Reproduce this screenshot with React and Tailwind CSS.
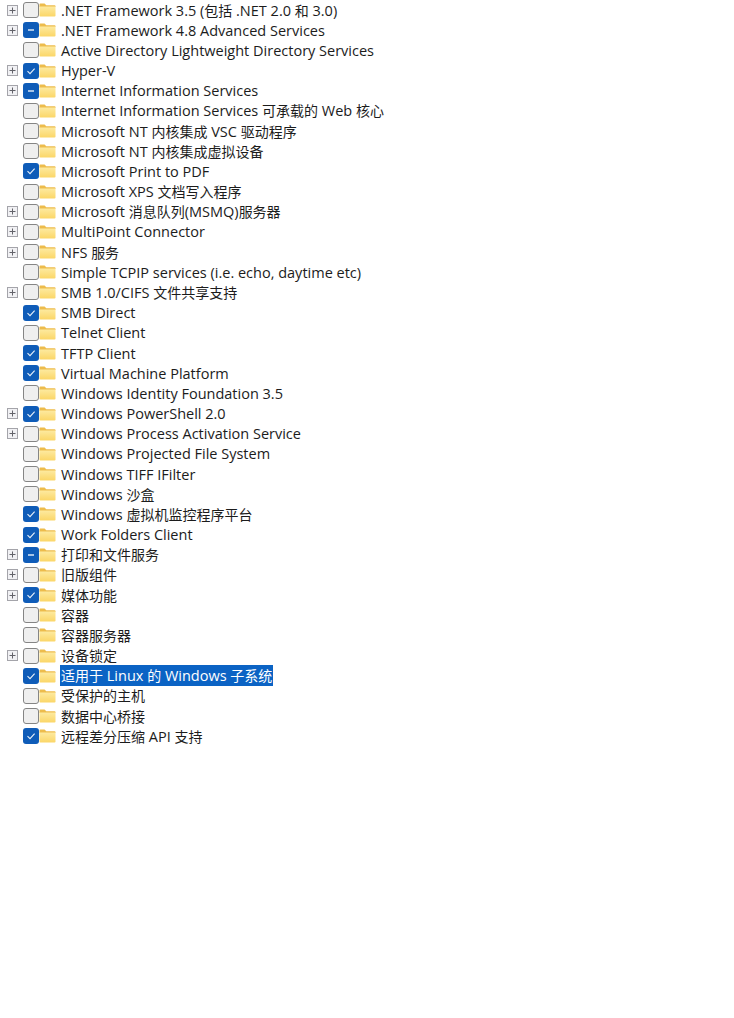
const FEATURES = [
  { label: '.NET Framework 3.5 (包括 .NET 2.0 和 3.0)', tree: true, state: 'off' },
  { label: '.NET Framework 4.8 Advanced Services', tree: true, state: 'mixed' },
  { label: 'Active Directory Lightweight Directory Services', state: 'off' },
  { label: 'Hyper-V', tree: true, state: 'on' },
  { label: 'Internet Information Services', tree: true, state: 'mixed' },
  { label: 'Internet Information Services 可承载的 Web 核心', state: 'off' },
  { label: 'Microsoft NT 内核集成 VSC 驱动程序', state: 'off' },
  { label: 'Microsoft NT 内核集成虚拟设备', state: 'off' },
  { label: 'Microsoft Print to PDF', state: 'on' },
  { label: 'Microsoft XPS 文档写入程序', state: 'off' },
  { label: 'Microsoft 消息队列(MSMQ)服务器', tree: true, state: 'off' },
  { label: 'MultiPoint Connector', tree: true, state: 'off' },
  { label: 'NFS 服务', tree: true, state: 'off' },
  { label: 'Simple TCPIP services (i.e. echo, daytime etc)', state: 'off' },
  { label: 'SMB 1.0/CIFS 文件共享支持', tree: true, state: 'off' },
  { label: 'SMB Direct', state: 'on' },
  { label: 'Telnet Client', state: 'off' },
  { label: 'TFTP Client', state: 'on' },
  { label: 'Virtual Machine Platform', state: 'on' },
  { label: 'Windows Identity Foundation 3.5', state: 'off' },
  { label: 'Windows PowerShell 2.0', tree: true, state: 'on' },
  { label: 'Windows Process Activation Service', tree: true, state: 'off' },
  { label: 'Windows Projected File System', state: 'off' },
  { label: 'Windows TIFF IFilter', state: 'off' },
  { label: 'Windows 沙盒', state: 'off' },
  { label: 'Windows 虚拟机监控程序平台', state: 'on' },
  { label: 'Work Folders Client', state: 'on' },
  { label: '打印和文件服务', tree: true, state: 'mixed' },
  { label: '旧版组件', tree: true, state: 'off' },
  { label: '媒体功能', tree: true, state: 'on' },
  { label: '容器', state: 'off' },
  { label: '容器服务器', state: 'off' },
  { label: '设备锁定', tree: true, state: 'off' },
  { label: '适用于 Linux 的 Windows 子系统', state: 'on', selected: true },
  { label: '受保护的主机', state: 'off' },
  { label: '数据中心桥接', state: 'off' },
  { label: '远程差分压缩 API 支持', state: 'on' },
];

function Expander() {
  return (
    <svg width="11" height="11" viewBox="0 0 11 11" className="shrink-0">
      <rect x="0.5" y="0.5" width="10" height="10" fill="#f1f1f4" stroke="#a4a4aa" />
      <path d="M2.5 5.5h6M5.5 2.5v6" stroke="#63636a" strokeWidth="1" />
    </svg>
  );
}

function Check({ state }) {
  if (state === 'off') {
    return <div className="w-[16px] h-[16px] rounded-[3px] border border-[#858585] bg-[#efefef] shrink-0" />;
  }
  return (
    <div className="w-[16px] h-[16px] rounded-[3px] bg-[#0f5cb8] flex items-center justify-center shrink-0">
      <svg width="10" height="10" viewBox="0 0 10 10" fill="none" stroke="#e8f1fb" strokeWidth="1.1">
        {state === 'on' ? <path d="M1.5 5.2 4 7.6 8.6 2.6" /> : <path d="M2 5h6" strokeWidth="1.4" />}
      </svg>
    </div>
  );
}

function Folder() {
  return (
    <svg width="17" height="14" viewBox="0 0 17 14" className="shrink-0">
      <defs>
        <linearGradient id="folderFill" x1="0" y1="0" x2="0" y2="1">
          <stop offset="0" stopColor="#fdeaa0" />
          <stop offset="1" stopColor="#fbd667" />
        </linearGradient>
      </defs>
      <path d="M0.5 1.5C0.5 .9 1 .5 1.6 .5H5.6l1.7 1.7H15.6c.6 0 .9.3.9.9V4H0.5z" fill="#edbc4c" />
      <path d="M0.5 3.4H16.5v9.4c0 .5-.3.8-.9.8H1.4c-.6 0-.9-.3-.9-.8z" fill="url(#folderFill)" />
    </svg>
  );
}

// CJK runs sit a touch smaller than the latin text
function Label({ text }) {
  const parts = text.split(/([\u4e00-\u9fff]+)/);
  return parts.map((part, i) => (
    <span key={i} className={i % 2 ? 'text-[14px]' : 'text-[14.5px]'}>{part}</span>
  ));
}

function FeatureRow({ label, tree, state, selected }) {
  return (
    <div className="flex items-center h-[20.18px]">
      <div className="w-[23px] pl-[7px] shrink-0">{tree && <Expander />}</div>
      <Check state={state} />
      <Folder />
      <span className={`ml-[4px] px-[1px] leading-[20px] whitespace-nowrap ${selected ? 'bg-[#0b63c4] text-white' : 'text-[#1c1c1c]'}`}>
        <Label text={label} />
      </span>
    </div>
  );
}

export default function App() {
  return (
    <div className="w-[734px] h-[1018px] bg-white overflow-hidden font-['Open_Sans','Noto_Sans_CJK_SC',sans-serif]">
      {FEATURES.map(f => <FeatureRow key={f.label} {...f} />)}
    </div>
  );
}
